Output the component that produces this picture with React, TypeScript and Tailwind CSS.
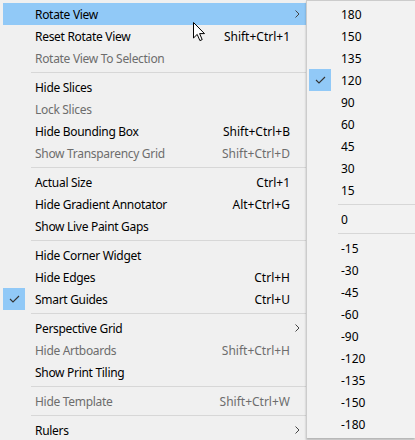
import React from "react";

type Item =
  | { sep: true }
  | {
      sep?: false;
      label: string;
      shortcut?: string;
      disabled?: boolean;
      checked?: boolean;
      sub?: boolean;
      active?: boolean;
    };

const mainItems: Item[] = [
  { label: "Rotate View", sub: true, active: true },
  { label: "Reset Rotate View", shortcut: "Shift+Ctrl+1" },
  { label: "Rotate View To Selection", disabled: true },
  { sep: true },
  { label: "Hide Slices" },
  { label: "Lock Slices", disabled: true },
  { label: "Hide Bounding Box", shortcut: "Shift+Ctrl+B" },
  { label: "Show Transparency Grid", shortcut: "Shift+Ctrl+D", disabled: true },
  { sep: true },
  { label: "Actual Size", shortcut: "Ctrl+1" },
  { label: "Hide Gradient Annotator", shortcut: "Alt+Ctrl+G" },
  { label: "Show Live Paint Gaps" },
  { sep: true },
  { label: "Hide Corner Widget" },
  { label: "Hide Edges", shortcut: "Ctrl+H" },
  { label: "Smart Guides", shortcut: "Ctrl+U", checked: true },
  { sep: true },
  { label: "Perspective Grid", sub: true },
  { label: "Hide Artboards", shortcut: "Shift+Ctrl+H", disabled: true },
  { label: "Show Print Tiling" },
  { sep: true },
  { label: "Hide Template", shortcut: "Shift+Ctrl+W", disabled: true },
  { sep: true },
  { label: "Rulers", sub: true },
];

const angles: (string | null)[] = [
  "180", "150", "135", "120", "90", "60", "45", "30", "15", null,
  "0", null,
  "-15", "-30", "-45", "-60", "-90", "-120", "-135", "-150", "-180",
];

function Check() {
  return (
    <svg width="11" height="8" viewBox="0 0 11 8" fill="none">
      <path d="M1 4 L4 7 L10 1" stroke="#333" strokeWidth="1.1" />
    </svg>
  );
}

function Chevron() {
  return (
    <svg width="5" height="8" viewBox="0 0 5 8" fill="none">
      <path d="M0.5 0.5 L4 4 L0.5 7.5" stroke="#444" strokeWidth="1" />
    </svg>
  );
}

function Cursor() {
  return (
    <svg width="13" height="20" viewBox="0 0 13 20" className="absolute left-[193px] top-[22px]">
      <path
        d="M0.5 0.5 L0.5 16 L4.2 12.4 L6.9 18.6 L9.2 17.6 L6.6 11.6 L11.5 11.6 Z"
        fill="#fff"
        stroke="#000"
        strokeWidth="1"
        strokeLinejoin="miter"
      />
    </svg>
  );
}

export default function App() {
  return (
    <div
      className="relative flex h-[440px] w-[415px] overflow-hidden bg-[#f0f0f0] text-[12px] text-black"
      style={{ fontFamily: '"Noto Sans", "Open Sans", sans-serif' }}
    >
      <div className="w-[306px] shrink-0 pl-[3px] pt-[3px]">
        {mainItems.map((it, i) =>
          it.sep ? (
            <div key={i} className="flex h-[7px] items-center pl-[28px]">
              <div className="h-px w-full bg-[#d7d7d7]" />
            </div>
          ) : (
            <div
              key={i}
              className={
                "flex h-[22px] items-center " +
                (it.active ? "bg-[#91c9f7] " : "") +
                (it.disabled ? "text-[#6d6d6d]" : "text-black")
              }
            >
              <div
                className={
                  "flex h-[22px] w-[22px] items-center justify-center " +
                  (it.checked ? "bg-[#91c9f7]" : "")
                }
              >
                {it.checked ? <Check /> : null}
              </div>
              <div className="ml-[10px] flex-1 whitespace-nowrap pt-px tracking-[-0.3px]">{it.label}</div>
              {it.shortcut ? (
                <div className="mr-[16px] whitespace-nowrap pt-px">{it.shortcut}</div>
              ) : null}
              {it.sub ? (
                <div className="mr-[6px] flex items-center">
                  <Chevron />
                </div>
              ) : null}
            </div>
          ),
        )}
      </div>

      <div className="h-[438px] flex-1 border-l border-t border-[#cccccc] bg-[#f2f2f2] pl-[2px] pt-[2px] shadow-[0_2px_2px_rgba(0,0,0,0.25)]">
        {angles.map((a, i) =>
          a === null ? (
            <div key={i} className="flex h-[7px] items-center pl-[29px]">
              <div className="h-px w-full bg-[#d7d7d7]" />
            </div>
          ) : (
            <div key={i} className="flex h-[22px] items-center">
              <div
                className={
                  "flex h-[22px] w-[22px] items-center justify-center " +
                  (a === "120" ? "bg-[#91c9f7]" : "")
                }
              >
                {a === "120" ? <Check /> : null}
              </div>
              <div className="ml-[10px] pt-px">{a}</div>
            </div>
          ),
        )}
      </div>

      <Cursor />
    </div>
  );
}
